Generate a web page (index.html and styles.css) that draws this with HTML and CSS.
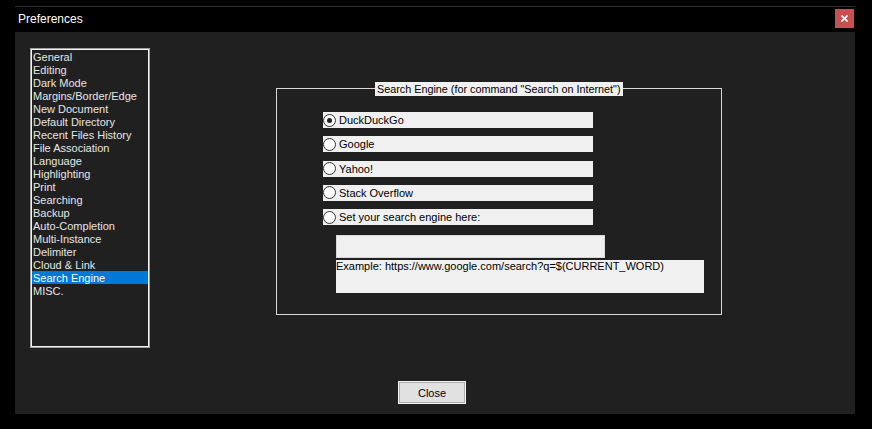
FILE: index.html
```html
<!DOCTYPE html>
<html>
<head>
<meta charset="utf-8">
<link rel="stylesheet" href="styles.css">
</head>
<body>
<div class="frame">
  <div class="titlebar">
    <span class="title">Preferences</span>
    <button class="xbtn" aria-label="Close">
      <svg width="7" height="7" viewBox="0 0 7 7"><path d="M0.5 0.5L6.5 6.5M6.5 0.5L0.5 6.5" stroke="#fff" stroke-width="1.6"/></svg>
    </button>
  </div>
  <div class="body">
    <div class="main">
      <ul class="listbox">
        <li>General</li>
        <li>Editing</li>
        <li>Dark Mode</li>
        <li>Margins/Border/Edge</li>
        <li>New Document</li>
        <li>Default Directory</li>
        <li>Recent Files History</li>
        <li>File Association</li>
        <li>Language</li>
        <li>Highlighting</li>
        <li>Print</li>
        <li>Searching</li>
        <li>Backup</li>
        <li>Auto-Completion</li>
        <li>Multi-Instance</li>
        <li>Delimiter</li>
        <li>Cloud &amp; Link</li>
        <li class="sel">Search Engine</li>
        <li>MISC.</li>
      </ul>
      <div class="group">
        <div class="legend">Search Engine (for command "Search on Internet")</div>
        <div class="radios">
          <div class="radio checked"><span class="dot"></span>DuckDuckGo</div>
          <div class="radio"><span class="dot"></span>Google</div>
          <div class="radio"><span class="dot"></span>Yahoo!</div>
          <div class="radio"><span class="dot"></span>Stack Overflow</div>
          <div class="radio"><span class="dot"></span>Set your search engine here:</div>
        </div>
        <div class="custom">
          <div class="input"></div>
          <div class="example">Example: https://www.google.com/search?q=$(CURRENT_WORD)</div>
        </div>
      </div>
    </div>
    <div class="footer">
      <button class="close">Close</button>
    </div>
  </div>
</div>
</body>
</html>
```

FILE: styles.css
```css
html, body {
  margin: 0;
  padding: 0;
  background: #000;
  width: 872px;
  height: 429px;
  overflow: hidden;
  font-family: "Liberation Sans", Arial, sans-serif;
  font-size: 11px;
}
.frame {
  margin: 6px 0 0 15px;
  width: 840px;
  border-top: 1px solid #2e2e2e;
}
.titlebar {
  height: 25px;
  display: flex;
  align-items: flex-start;
  justify-content: space-between;
  background: #000;
}
.title {
  color: #fff;
  font-size: 12px;
  margin: 5px 0 0 3px;
}
.xbtn {
  width: 19px;
  height: 19px;
  margin: 2px 1px 0 0;
  padding: 0;
  border: none;
  background: #c75050;
  display: flex;
  align-items: center;
  justify-content: center;
}
.body {
  height: 382px;
  background: #202020;
  padding: 16px 0 0 15px;
  box-sizing: border-box;
}
.main {
  display: flex;
  align-items: flex-start;
}
.listbox {
  list-style: none;
  margin: 0;
  padding: 1px;
  width: 120px;
  height: 300px;
  box-sizing: border-box;
  border: 1px solid #a0a0a0;
  box-shadow: inset 0 0 0 1px #f4f4f4;
  background: #202020;
}
.listbox li {
  height: 13px;
  line-height: 14px;
  padding-left: 1px;
  color: #e6e6e6;
  white-space: nowrap;
}
.listbox li.sel {
  background: #0078d7;
  color: #fff;
}
.group {
  position: relative;
  margin: 40px 0 0 126px;
  width: 446px;
  height: 227px;
  box-sizing: border-box;
  border: 1px solid #d8d8d8;
  padding: 23px 0 0 46px;
}
.legend {
  position: absolute;
  left: 98px;
  top: -7px;
  height: 14px;
  line-height: 14px;
  padding: 0 2px;
  background: #f0f0f0;
  color: #000;
  font-size: 10.8px;
  white-space: nowrap;
}
.radios {
  display: flex;
  flex-direction: column;
  gap: 8.25px;
}
.radio {
  width: 270px;
  height: 16px;
  background: #f0f0f0;
  color: #000;
  display: flex;
  align-items: center;
  gap: 3px;
  white-space: nowrap;
}
.dot {
  width: 11px;
  height: 11px;
  border: 1px solid #333;
  border-radius: 50%;
  background: #fff;
  display: flex;
  align-items: center;
  justify-content: center;
}
.radio.checked .dot::after {
  content: "";
  width: 5px;
  height: 5px;
  border-radius: 50%;
  background: #222;
}
.custom {
  margin: 10px 0 0 13px;
  display: flex;
  flex-direction: column;
  gap: 2px;
}
.input {
  width: 269px;
  height: 23px;
  box-sizing: border-box;
  border: 1px solid #d9d9d9;
  background: #f0f0f0;
}
.example {
  width: 368px;
  height: 33px;
  background: #f0f0f0;
  color: #000;
  line-height: 13px;
  white-space: nowrap;
}
.footer {
  padding: 33px 0 0 368px;
}
.close {
  width: 68px;
  height: 23px;
  background: #e1e1e1;
  border: 1px solid #f4f4f4;
  box-shadow: inset 0 0 0 1px #adadad;
  color: #000;
  font-family: "Liberation Sans", Arial, sans-serif;
  font-size: 11px;
  padding: 0;
}
```
